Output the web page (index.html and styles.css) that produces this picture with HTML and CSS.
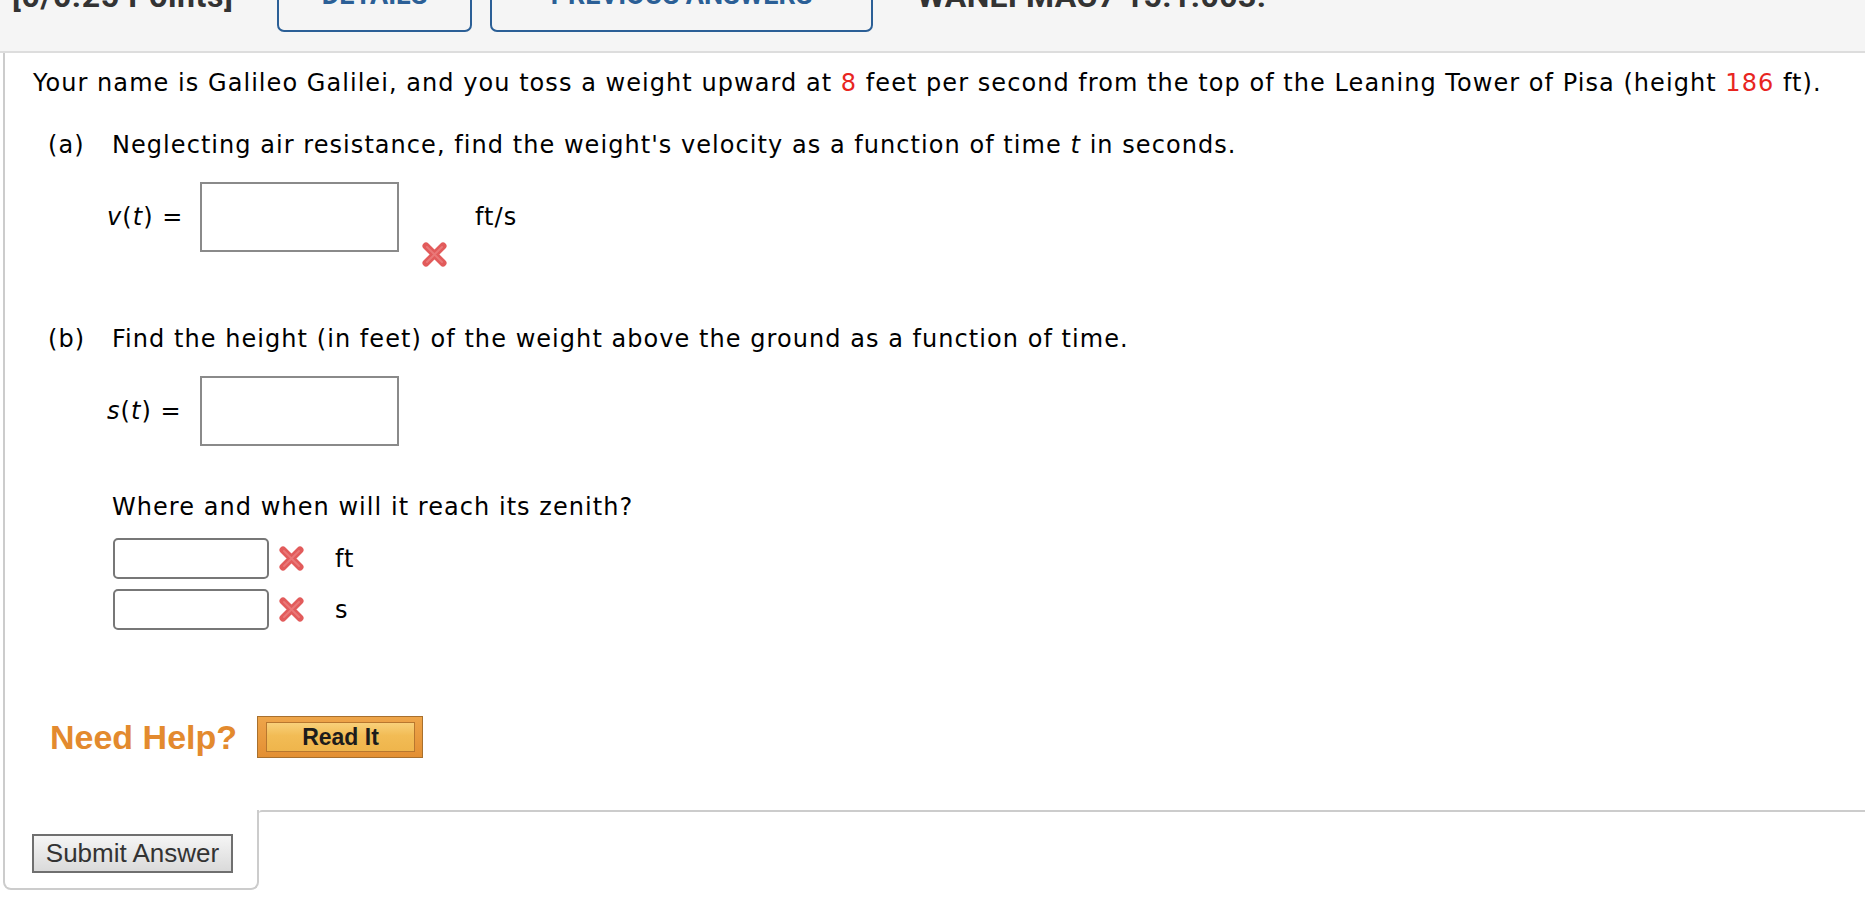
FILE: index.html
```html
<!DOCTYPE html>
<html lang="en">
<head>
<meta charset="utf-8">
<title>WANEFMAC7 15.1.003</title>
<link rel="stylesheet" href="styles.css">
</head>
<body>
<header class="topbar">
  <span class="points">[0/0.25 Points]</span>
  <span class="hbtn details">DETAILS</span>
  <span class="hbtn prev">PREVIOUS ANSWERS</span>
  <span class="code">WANEFMAC7 15.1.003.</span>
</header>

<main class="question">
  <p class="intro">Your name is Galileo Galilei, and you toss a weight upward at <span class="red">8</span> feet per second from the top of the Leaning Tower of Pisa (height <span class="red">186</span> ft).</p>

  <div class="part-head part-a"><span class="lbl">(a)</span><span>Neglecting air resistance, find the weight's velocity as a function of time <i>t</i> in seconds.</span></div>
  <div class="answer-row row-a">
    <span class="var"><i>v</i>(<i>t</i>) =</span>
    <span class="bigbox"></span>
    <svg class="xicon xlow" viewBox="0 0 29 29" width="29" height="29" aria-hidden="true"><path d="M6 6L23 23M23 6L6 23" stroke="#e25b5b" stroke-width="7" stroke-linecap="round"/><path d="M7 7L22 22M22 7L7 22" stroke="#f19090" stroke-width="2" stroke-linecap="round" opacity=".55"/></svg>
    <span class="unit unit-a">ft/s</span>
  </div>

  <div class="part-head part-b"><span class="lbl">(b)</span><span>Find the height (in feet) of the weight above the ground as a function of time.</span></div>
  <div class="answer-row row-b">
    <span class="var"><i>s</i>(<i>t</i>) =</span>
    <span class="bigbox"></span>
  </div>

  <p class="where">Where and when will it reach its zenith?</p>
  <div class="zrow z1">
    <span class="smallbox"></span>
    <svg class="xicon" viewBox="0 0 29 29" width="29" height="29" aria-hidden="true"><path d="M6 6L23 23M23 6L6 23" stroke="#e25b5b" stroke-width="7" stroke-linecap="round"/><path d="M7 7L22 22M22 7L7 22" stroke="#f19090" stroke-width="2" stroke-linecap="round" opacity=".55"/></svg>
    <span class="unit zunit">ft</span>
  </div>
  <div class="zrow z2">
    <span class="smallbox"></span>
    <svg class="xicon" viewBox="0 0 29 29" width="29" height="29" aria-hidden="true"><path d="M6 6L23 23M23 6L6 23" stroke="#e25b5b" stroke-width="7" stroke-linecap="round"/><path d="M7 7L22 22M22 7L7 22" stroke="#f19090" stroke-width="2" stroke-linecap="round" opacity=".55"/></svg>
    <span class="unit zunit">s</span>
  </div>

  <div class="help">
    <span class="needhelp">Need Help?</span>
    <span class="readit"><span class="readit-inner">Read It</span></span>
  </div>
</main>

<footer class="footer">
  <div class="tab"><button class="submit" type="button">Submit Answer</button></div>
  <div class="rest"></div>
</footer>
</body>
</html>
```

FILE: styles.css
```css
html, body {
  margin: 0;
  padding: 0;
  background: #fff;
}

body {
  font-family: "DejaVu Sans", Verdana, sans-serif;
  font-size: 24px;
  color: #000;
}

/* ---------- top bar (partly scrolled out of view) ---------- */
.topbar {
  display: flex;
  align-items: flex-end;
  height: 51px;
  overflow: hidden;
  background: #f5f5f5;
  border-bottom: 2px solid #dddddd;
  padding-left: 12px;
  font-family: Roboto, "Liberation Sans", sans-serif;
  font-weight: 700;
}

.points,
.code {
  font-size: 32px;
  line-height: 30px;
  margin-bottom: 40px;
  color: #333;
  white-space: nowrap;
}

.points {
  width: 265px;
  flex: none;
  letter-spacing: 0.6px;
}

.code {
  letter-spacing: 0.4px;
}

.hbtn {
  flex: none;
  box-sizing: border-box;
  color: #2b5f96;
  border: 2px solid #2b5f96;
  border-radius: 7px;
  font-size: 27px;
  line-height: 30px;
  padding: 30px 0 20px;
  margin-bottom: 19px;
  text-align: center;
  white-space: nowrap;
}

.details {
  width: 195px;
  margin-right: 18px;
}

.prev {
  width: 383px;
  margin-right: 44px;
}

/* ---------- question body ---------- */
.question {
  display: block;
  margin-left: 3px;
  border-left: 2px solid #cccccc;
  padding: 15px 0 52px 28px;
  letter-spacing: 1.05px;
}

p {
  margin: 0;
}

.intro {
  line-height: 30px;
  white-space: nowrap;
}

.red {
  color: #e8251f;
}

.part-head {
  display: flex;
  line-height: 30px;
  padding-left: 15px;
  white-space: nowrap;
}

.part-a {
  margin-top: 32px;
}

.part-b {
  margin-top: 72px;
}

.lbl {
  width: 64px;
  flex: none;
}

.answer-row {
  display: flex;
  align-items: center;
  padding-left: 74px;
  margin-top: 22px;
  line-height: 30px;
}

.var {
  width: 93px;
  flex: none;
  white-space: nowrap;
}

.bigbox {
  display: block;
  box-sizing: border-box;
  width: 199px;
  height: 70px;
  border: 2px solid #8a8a8a;
  background: #fff;
}

.xicon {
  display: block;
  flex: none;
}

.xlow {
  align-self: flex-end;
  margin-left: 21px;
  margin-bottom: -17px;
}

.unit-a {
  margin-left: 26px;
}

.where {
  margin-top: 46px;
  padding-left: 79px;
  line-height: 30px;
}

.zrow {
  display: flex;
  align-items: center;
  padding-left: 80px;
  line-height: 30px;
}

.z1 {
  margin-top: 16px;
}

.z2 {
  margin-top: 10px;
}

.smallbox {
  display: block;
  box-sizing: border-box;
  width: 156px;
  height: 41px;
  border: 2px solid #777;
  border-radius: 5px;
  background: #fff;
}

.zrow .xicon {
  margin-left: 8px;
}

.zunit {
  margin-left: 29px;
}

/* ---------- help ---------- */
.help {
  display: flex;
  align-items: center;
  margin-top: 86px;
  padding-left: 17px;
  letter-spacing: normal;
}

.needhelp {
  width: 207px;
  flex: none;
  font-family: "Liberation Sans", Arial, sans-serif;
  font-weight: 700;
  font-size: 34px;
  color: #e38a2e;
  white-space: nowrap;
}

.readit {
  display: block;
  box-sizing: border-box;
  width: 166px;
  height: 42px;
  padding: 5px 7px 5px 8px;
  border: 1px solid #a8702e;
  background: linear-gradient(#eea54a, #e38f33);
}

.readit-inner {
  display: flex;
  align-items: center;
  justify-content: center;
  box-sizing: border-box;
  height: 100%;
  border: 1px solid #b8772f;
  background: linear-gradient(#f8d07a, #f2bc55 45%, #efb54c);
  font-family: "Liberation Sans", Arial, sans-serif;
  font-weight: 700;
  font-size: 23px;
  color: #1c1c1c;
}

/* ---------- footer ---------- */
.footer {
  display: flex;
  margin-left: 3px;
}

.tab {
  box-sizing: border-box;
  width: 256px;
  flex: none;
  border: 2px solid #cccccc;
  border-top: 0;
  border-radius: 0 0 8px 8px;
  padding: 24px 0 15px 27px;
}

.submit {
  display: block;
  box-sizing: border-box;
  width: 201px;
  height: 39px;
  padding: 0;
  margin: 0;
  border: 2px solid #6f6f6f;
  border-radius: 0;
  background: linear-gradient(#f5f5f5, #dadada);
  font-family: "Liberation Sans", Arial, sans-serif;
  font-size: 26px;
  color: #333;
}

.rest {
  flex: 1;
  border-top: 2px solid #cccccc;
  border-top-left-radius: 3px;
}
```
